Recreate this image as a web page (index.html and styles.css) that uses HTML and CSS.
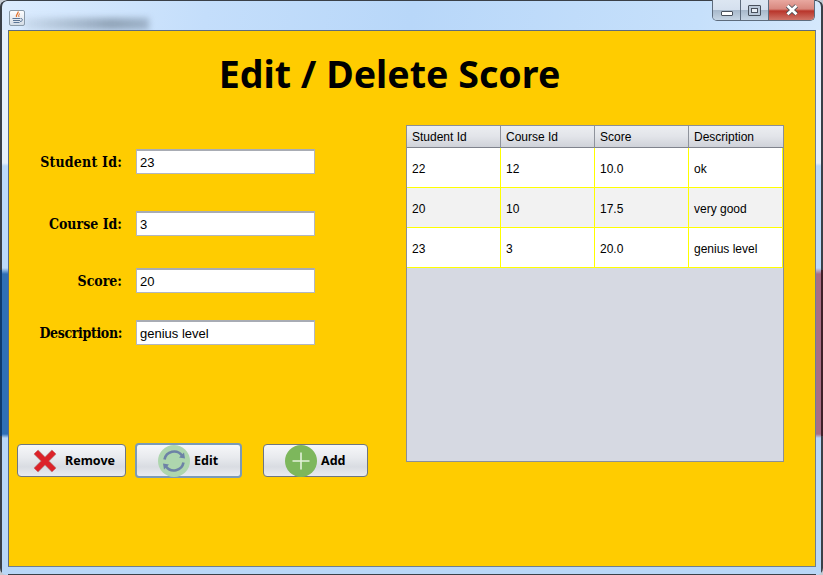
FILE: index.html
```html
<!DOCTYPE html>
<html lang="en">
<head>
<meta charset="utf-8">
<title>Edit / Delete Score</title>
<link rel="stylesheet" href="styles.css">
</head>
<body>
<div class="window">
  <header class="titlebar">
    <div class="smudge"></div>
    <div class="app-icon">
      <svg width="16" height="16" viewBox="0 0 16 16">
        <path d="M9 1.500C10 3.500 6.500 4.500 7.500 7" fill="none" stroke="#e2702a" stroke-width="1.300"/>
        <path d="M11 3.500C9.500 4.500 9.500 5.500 10 7" fill="none" stroke="#e2702a" stroke-width="1"/>
        <path d="M3.500 8.500h8M4 10.500h7M4.500 12.500h6" stroke="#5b7596" stroke-width="1"/>
        <path d="M12 8.500c2 0 2 3-1 3" fill="none" stroke="#5b7596" stroke-width="1"/>
      </svg>
    </div>
    <div class="controls">
      <div class="ctl ctl-min"><span class="min-glyph"></span></div>
      <div class="ctl ctl-max"><span class="max-glyph"></span></div>
      <div class="ctl ctl-close">
        <svg width="16" height="12" viewBox="0 0 16 12">
          <path d="M3.500 1.800L12.500 10.200M12.500 1.800L3.500 10.200" stroke="#4a5058" stroke-width="4.400"/>
          <path d="M3.500 1.800L12.500 10.200M12.500 1.800L3.500 10.200" stroke="#fff" stroke-width="2.800"/>
        </svg>
      </div>
    </div>
  </header>
  <main class="panel">
    <h1 class="title">Edit / Delete Score</h1>
    <div class="content">
      <section class="left">
        <form class="form">
          <div class="row row-a"><label class="label">Student Id:</label><input class="field" value="23"></div>
          <div class="row row-b"><label class="label">Course Id:</label><input class="field" value="3"></div>
          <div class="row row-c"><label class="label">Score:</label><input class="field" value="20"></div>
          <div class="row row-d"><label class="label">Description:</label><input class="field" value="genius level"></div>
        </form>
        <div class="buttons">
          <button type="button" class="btn btn-remove">
            <svg width="24" height="24" viewBox="0 0 24 24">
              <path d="M3 3L21 21M21 3L3 21" stroke="#b98a8a" stroke-width="6.400"/>
              <path d="M3 3L21 21M21 3L3 21" stroke="#dc2229" stroke-width="5.200"/>
            </svg>
            <span>Remove</span>
          </button>
          <button type="button" class="btn btn-edit">
            <svg class="round" width="32" height="32" viewBox="0 0 32 32">
              <circle cx="16" cy="16" r="16" fill="#aed6ae"/>
              <path d="M6.500 14.500A9.800 9.800 0 0 1 24 10.500M25.500 17.500A9.800 9.800 0 0 1 8 21.500" fill="none" stroke="#6d82a6" stroke-width="2.600"/>
              <path d="M21 12.500L27 13.500L26 7.500ZM11 19.500L5 18.500L6 24.500Z" fill="#6d82a6"/>
            </svg>
            <span>Edit</span>
          </button>
          <button type="button" class="btn btn-add">
            <svg class="round" width="32" height="32" viewBox="0 0 32 32">
              <circle cx="16" cy="16" r="16" fill="#7db75c"/>
              <path d="M16 7.500V24.500M7.500 16H24.500" stroke="#e4f2da" stroke-width="1.600"/>
            </svg>
            <span>Add</span>
          </button>
        </div>
      </section>
      <section class="pane">
        <table class="grid">
          <thead>
            <tr><th>Student Id</th><th>Course Id</th><th>Score</th><th>Description</th></tr>
          </thead>
          <tbody>
            <tr><td>22</td><td>12</td><td>10.0</td><td>ok</td></tr>
            <tr><td>20</td><td>10</td><td>17.5</td><td>very good</td></tr>
            <tr><td>23</td><td>3</td><td>20.0</td><td>genius level</td></tr>
          </tbody>
        </table>
      </section>
    </div>
  </main>
</div>
</body>
</html>
```
FILE: styles.css
```css
* { box-sizing: border-box; }
html, body { margin: 0; padding: 0; width: 823px; height: 575px; overflow: hidden; background: #c4cad2; }
.window {
  position: relative;
  width: 823px; height: 575px;
  padding: 0 0 0 8px;
  border-radius: 7px 7px 7px 7px;
  background:
    linear-gradient(#3a4048 0 270px, #0f3a6c 270px 436px, #3a4048 436px) 0 0 / 2px 100% no-repeat,
    linear-gradient(#3a4048 0 270px, #3f1f28 270px 436px, #3a4048 436px) 821px 0 / 2px 100% no-repeat,
    linear-gradient(#e6f0fb 0 163px, #bcdafa 166px 268px, #2f6fb5 274px 434px, #b9d7f7 438px) 0 0 / 8px 100% no-repeat,
    linear-gradient(#e6f0fb 0 163px, #bcdafa 166px 268px, #a86f86 274px 434px, #b9d7f7 438px) 816px 0 / 5px 100% no-repeat,
    linear-gradient(#3a4048, #3a4048) 0 574px / 100% 1px no-repeat,
    #b9d7f7;
  display: flex; flex-direction: column;
  overflow: hidden;
}
.titlebar {
  position: relative;
  margin: 0 0 0 -8px;
  padding: 9px 0 0 7px;
  height: 30px;
  flex: none;
  display: flex; justify-content: space-between; align-items: flex-start;
  border-top: 1px solid #3a4048;
  border-left: 2px solid #3a4048;
  border-right: 2px solid #3a4048;
  border-radius: 7px 7px 0 0;
  background: linear-gradient(100deg, #dcecfe 0, #c4defb 25%, #b8d7f9 50%, #c6e0fb 85%, #d5e8fc 100%);
}
.smudge {
  position: absolute; left: 22px; top: 17px; width: 125px; height: 12px;
  background: linear-gradient(90deg, rgba(95, 112, 130, .1), rgba(95, 112, 130, .55) 70%, rgba(95, 112, 130, .4));
  filter: blur(3px);
}
.app-icon {
  position: relative;
  width: 16px; height: 16px;
  border: 1px solid #8a9aa8; border-radius: 2px;
  background: linear-gradient(#fdfeff, #d5dde6);
  display: flex;
}
.app-icon svg { margin: -1px; }
.controls {
  position: relative;
  margin: -10px 6px 0 0;
  display: flex; height: 21px;
  border: 1px solid #5d6b7c; border-top: 0;
  border-radius: 0 0 5px 5px;
  overflow: hidden;
}
.ctl { display: flex; align-items: center; justify-content: center; }
.ctl-min { width: 28px; border-right: 1px solid #5d6b7c; background: linear-gradient(#dce6f2 0, #d5e0ee 48%, #a8b9cb 52%, #c6d5e4 100%); align-items: flex-end; padding-bottom: 4px; }
.ctl-max { width: 27px; background: linear-gradient(#dce6f2 0, #d5e0ee 48%, #a8b9cb 52%, #c6d5e4 100%); }
.ctl-close { width: 46px; border-left: 1px solid #5d6b7c; background: linear-gradient(#e8a8a0 0, #d8877e 45%, #b9352b 55%, #cf7468 100%); }
.min-glyph { width: 12px; height: 5px; border: 1px solid #48505c; background: #fff; border-radius: 1px; }
.max-glyph { width: 13px; height: 11px; border: 1px solid #48505c; background: #e8eef5; box-shadow: inset 0 0 0 2px #bcc9d8, inset 0 0 0 3px #48505c; border-radius: 1px; }
.panel {
  width: 808px; height: 537px;
  flex: none;
  background: #ffcc00;
  border: 1px solid #5c6b7e;
  border-right-color: #6e7e90;
  border-bottom-color: #6e7e90;
  position: relative;
}
.title {
  margin: 0;
  padding-top: 18px;
  height: 94px;
  width: 761px;
  text-align: center;
  font: 700 37.6px/50px "Noto Sans", sans-serif;
  color: #000;
}
.content { display: flex; align-items: flex-start; padding-left: 8px; }
.left { width: 389px; }
.form { display: flex; flex-direction: column; padding-top: 24px; height: 319px; }
.row { display: flex; align-items: center; height: 25px; }
.row-b { margin-top: 37px; }
.row-c { margin-top: 32px; }
.row-d { margin-top: 27px; }
.label {
  width: 105px; text-align: right; margin-right: 14px;
  font: 700 14px "DejaVu Serif Condensed", "DejaVu Serif", serif; color: #000;
  font-stretch: condensed;
}
.row-a .label { letter-spacing: .2px; }
.row-d .label { letter-spacing: -.35px; }
.field {
  width: 179px; height: 25px;
  padding: 0 3px;
  border: 1px solid #b3b7c0;
  border-top: 2px solid #a8acb4;
  background: #fff; color: #000;
  font: 400 13px "Liberation Sans", sans-serif;
  outline: 0;
}
.buttons { display: flex; align-items: center; height: 33px; }
.btn {
  height: 33px; padding: 0;
  display: flex; align-items: center;
  border: 1px solid #6e7680;
  border-radius: 4px;
  background: linear-gradient(#f6f7f9 0, #e8eaee 40%, #d9dce2 70%, #e9ebf0 100%);
  font: 700 12.5px "Noto Sans", sans-serif; color: #000;
}
.btn-remove { width: 109px; padding-left: 15px; gap: 8px; }
.btn-edit { width: 107px; height: 35px; margin-left: 9px; padding-left: 21px; gap: 4px; border: 2px solid #7a9ab8; }
.btn-add { width: 105px; margin-left: 21px; padding-left: 21px; gap: 4px; }
.round { margin: -1px 0; }
.pane {
  width: 378px; height: 337px;
  background: #d6d9e2;
  border: 1px solid #8c8f96;
}
.grid { border-collapse: separate; border-spacing: 0; table-layout: fixed; width: 376px; font: 400 12px "Liberation Sans", sans-serif; color: #000; }
.grid th {
  height: 22px; width: 94px; padding: 0 0 0 5px;
  text-align: left; font-weight: 400;
  background: linear-gradient(#eceef1 0, #e2e4e9 50%, #cfd2d9 100%);
  border-right: 1px solid #8f939b;
  border-bottom: 1px solid #7f838c;
}
.grid th:last-child { border-right: 0; }
.grid td {
  height: 40px; padding: 2px 0 0 5px;
  background: #fff;
  border-right: 1px solid #ffff00;
  border-bottom: 1px solid #ffff00;
}
.grid tr:nth-child(even) td { background: #f2f2f2; }
```
